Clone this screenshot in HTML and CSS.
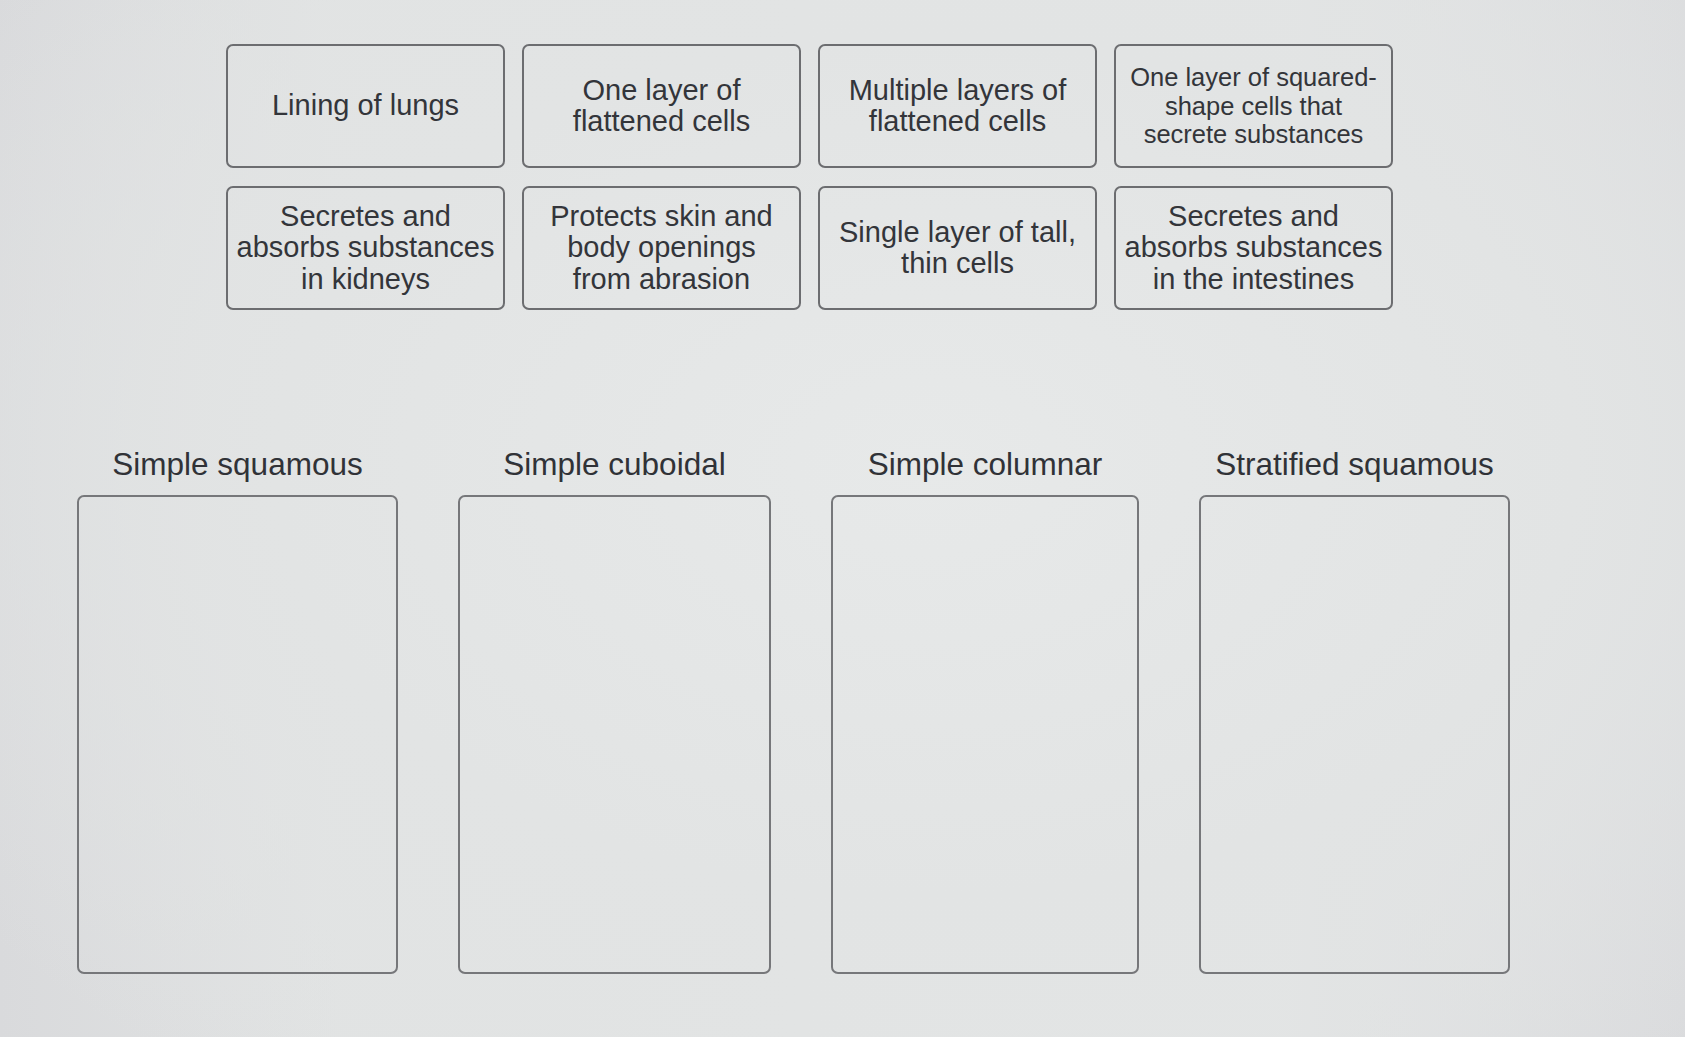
FILE: index.html
```html
<!DOCTYPE html>
<html lang="en">
<head>
<meta charset="utf-8">
<title>Epithelial tissue sorting</title>
<link rel="stylesheet" href="styles.css">
</head>
<body>
<main class="page">
  <section class="bank">
    <div class="tile">Lining of lungs</div>
    <div class="tile">One layer of<br>flattened cells</div>
    <div class="tile">Multiple layers of<br>flattened cells</div>
    <div class="tile tile-small">One layer of squared-<br>shape cells that<br>secrete substances</div>
    <div class="tile">Secretes and<br>absorbs substances<br>in kidneys</div>
    <div class="tile">Protects skin and<br>body openings<br>from abrasion</div>
    <div class="tile">Single layer of tall,<br>thin cells</div>
    <div class="tile">Secretes and<br>absorbs substances<br>in the intestines</div>
  </section>

  <section class="targets">
    <div class="target">
      <h2 class="target-title">Simple squamous</h2>
      <div class="drop"></div>
    </div>
    <div class="target">
      <h2 class="target-title">Simple cuboidal</h2>
      <div class="drop"></div>
    </div>
    <div class="target">
      <h2 class="target-title">Simple columnar</h2>
      <div class="drop"></div>
    </div>
    <div class="target">
      <h2 class="target-title">Stratified squamous</h2>
      <div class="drop"></div>
    </div>
  </section>
</main>
</body>
</html>
```

FILE: styles.css
```css
html, body {
  margin: 0;
  padding: 0;
  height: 100%;
}

body {
  font-family: "Liberation Sans", Arial, Helvetica, sans-serif;
  color: #33353a;
  background:
    radial-gradient(ellipse 70% 75% at 55% 45%, #e7e9e9 0%, #e2e4e4 55%, rgba(226, 228, 228, 0) 100%),
    linear-gradient(90deg, #d9dadc 0%, #e1e3e3 20%, #e3e5e5 75%, #dadbdd 100%);
  overflow: hidden;
}

.page {
  padding-top: 44px;
}

/* answer tiles */
.bank {
  display: grid;
  grid-template-columns: repeat(4, 279px);
  grid-auto-rows: 124px;
  gap: 18px 17px;
  margin-left: 226px;
}

.tile {
  box-sizing: border-box;
  display: flex;
  align-items: center;
  justify-content: center;
  text-align: center;
  border: 2px solid #6c6d70;
  border-radius: 7px;
  font-size: 29px;
  line-height: 31.5px;
  color: #33353a;
  padding: 0 4px;
  white-space: nowrap;
}

.tile-small {
  font-size: 25.5px;
  line-height: 28.5px;
}

/* drop columns */
.targets {
  display: grid;
  grid-template-columns: 321px 313px 308px 311px;
  column-gap: 60px;
  margin-left: 77px;
  margin-top: 135px;
}

.target {
  display: flex;
  flex-direction: column;
  align-items: center;
}

.target-title {
  margin: 0 0 12px;
  font-size: 31.5px;
  line-height: 38px;
  font-weight: normal;
  color: #303237;
}

.drop {
  box-sizing: border-box;
  width: 100%;
  height: 479px;
  border: 2px solid #76777a;
  border-radius: 7px;
}
```
